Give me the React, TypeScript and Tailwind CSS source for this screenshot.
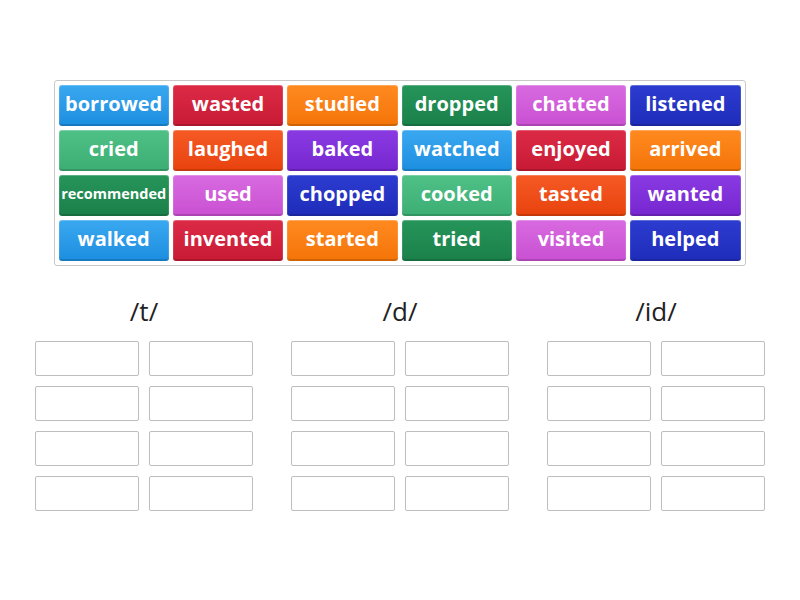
const tiles: { word: string; c: string }[] = [
  { word: "borrowed", c: "from-[#3aa8f0] to-[#1b8ee0]" },
  { word: "wasted", c: "from-[#dc2a45] to-[#c81a35]" },
  { word: "studied", c: "from-[#ff8a1f] to-[#f47406]" },
  { word: "dropped", c: "from-[#26955a] to-[#1a8049]" },
  { word: "chatted", c: "from-[#d86ae0] to-[#c950d2]" },
  { word: "listened", c: "from-[#2c3ccf] to-[#1f2cba]" },
  { word: "cried", c: "from-[#4fc187] to-[#3cae73]" },
  { word: "laughed", c: "from-[#f65a24] to-[#e8420c]" },
  { word: "baked", c: "from-[#8a3ae2] to-[#7726cf]" },
  { word: "watched", c: "from-[#3aa8f0] to-[#1b8ee0]" },
  { word: "enjoyed", c: "from-[#dc2a45] to-[#c81a35]" },
  { word: "arrived", c: "from-[#ff8a1f] to-[#f47406]" },
  { word: "recommended", c: "from-[#26955a] to-[#1a8049]" },
  { word: "used", c: "from-[#d86ae0] to-[#c950d2]" },
  { word: "chopped", c: "from-[#2c3ccf] to-[#1f2cba]" },
  { word: "cooked", c: "from-[#4fc187] to-[#3cae73]" },
  { word: "tasted", c: "from-[#f65a24] to-[#e8420c]" },
  { word: "wanted", c: "from-[#8a3ae2] to-[#7726cf]" },
  { word: "walked", c: "from-[#3aa8f0] to-[#1b8ee0]" },
  { word: "invented", c: "from-[#dc2a45] to-[#c81a35]" },
  { word: "started", c: "from-[#ff8a1f] to-[#f47406]" },
  { word: "tried", c: "from-[#26955a] to-[#1a8049]" },
  { word: "visited", c: "from-[#d86ae0] to-[#c950d2]" },
  { word: "helped", c: "from-[#2c3ccf] to-[#1f2cba]" },
]

const groups = ["/t/", "/d/", "/id/"]

export default function App() {
  return (
    <div
      className="w-[800px] h-[600px] bg-white overflow-hidden"
      style={{ fontFamily: '"Open Sans", "Noto Sans", sans-serif' }}
    >
      {/* word bank */}
      <div className="pt-[80px] flex justify-center">
        <div className="ml-[-1px] w-[692px] rounded-[3px] border border-[#c8c8c8] p-[4px] grid grid-cols-6 gap-[4px]">
          {tiles.map(({ word, c }) => (
            <div
              key={word}
              className={`h-[41px] rounded-[3px] bg-gradient-to-b ${c} flex items-center justify-center text-white font-bold leading-none shadow-[inset_0_1px_0_rgba(255,255,255,0.25),inset_1px_0_0_rgba(255,255,255,0.12),inset_-1px_0_0_rgba(255,255,255,0.12),inset_0_-2px_0_rgba(0,0,0,0.15)] ${
                word.length > 9 ? "text-[14.5px]" : "text-[20px]"
              }`}
            >
              <span className="-mt-[3px]">{word}</span>
            </div>
          ))}
        </div>
      </div>

      {/* drop zones */}
      <div className="mt-[28px] flex justify-center gap-[38px]">
        {groups.map((g) => (
          <div key={g} className="w-[218px]">
            <div className="h-[35px] text-center text-[26px] leading-[35px] text-[#222]">{g}</div>
            <div className="mt-[12px] grid grid-cols-2 gap-x-[10px] gap-y-[10px]">
              {Array.from({ length: 8 }).map((_, i) => (
                <div key={i} className="h-[35px] rounded-[2px] border border-[#bdbdbd] bg-white" />
              ))}
            </div>
          </div>
        ))}
      </div>
    </div>
  )
}
